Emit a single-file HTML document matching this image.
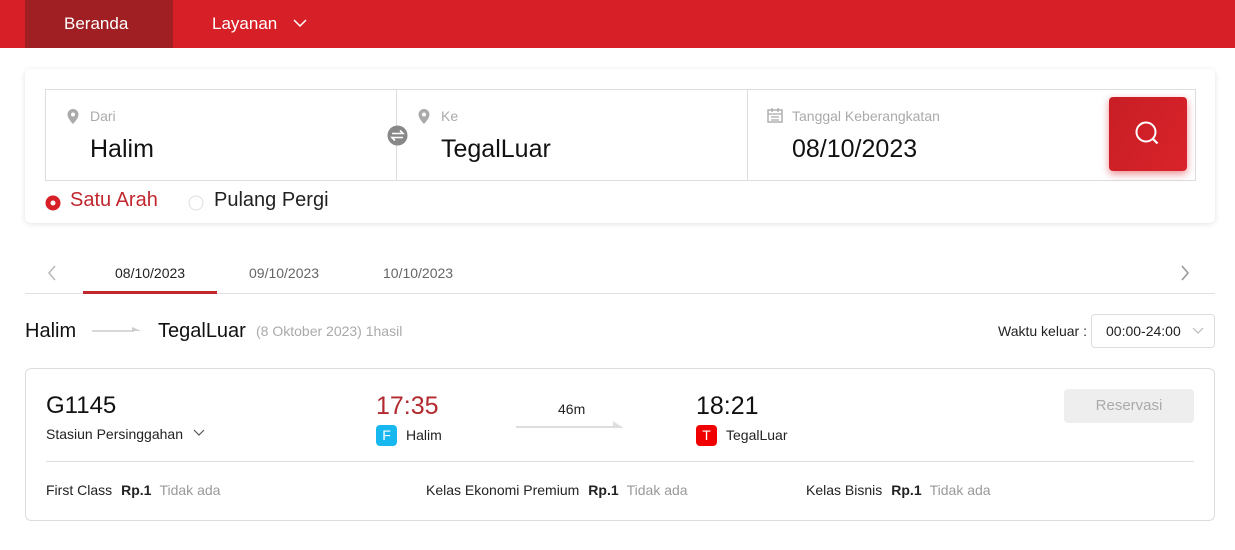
<!DOCTYPE html>
<html><head><meta charset="utf-8"><style>
*{box-sizing:border-box;margin:0;padding:0}
body{width:1235px;height:550px;overflow:hidden;background:#fff;font-family:"Liberation Sans",Arial,sans-serif;color:#111;position:relative}
.abs{position:absolute}
.hdr{position:absolute;left:0;top:0;width:1235px;height:48px;background:#d71f27}
.tab{position:absolute;top:0;height:48px;line-height:48px;color:#fff;font-size:17px}
.panel{position:absolute;left:25px;top:69px;width:1190px;height:154px;background:#fff;border-radius:6px;box-shadow:0 1px 6px rgba(0,0,0,.12)}
.box{position:absolute;left:45px;top:89px;width:1151px;height:92px;border:1px solid #ddd}
.lbl{font-size:14px;color:#aaa}
.big{font-size:25px;color:#111}
.card{position:absolute;left:25px;top:368px;width:1190px;height:153px;border:1px solid #ddd;border-radius:6px;background:#fff}
.p b{margin:0 8px 0 9px}
</style></head><body>
<div class="hdr"></div>
<div class="abs" style="left:25px;top:0;width:148px;height:48px;background:#9f1f23"></div>
<div class="tab" style="left:64px">Beranda</div>
<div class="tab" style="left:212px">Layanan</div>
<svg class="abs" style="left:293px;top:18px" width="14" height="10"><path d="M1 2l6 6 6-6" stroke="#fff" stroke-width="1.5" fill="none"/></svg>

<div class="panel"></div>
<div class="box"></div>
<div class="abs" style="left:396px;top:90px;width:1px;height:90px;background:#ddd"></div>
<div class="abs" style="left:747px;top:90px;width:1px;height:90px;background:#ddd"></div>
<svg class="abs" style="left:67px;top:109px" width="12" height="15"><path d="M6 0a5.5 5.5 0 0 0-5.5 5.5C.5 9.5 6 15 6 15s5.5-5.5 5.5-9.5A5.5 5.5 0 0 0 6 0z" fill="#aaa"/><circle cx="6" cy="5.5" r="2" fill="#fff"/></svg>
<div class="abs lbl" style="left:90px;top:108px">Dari</div>
<div class="abs big" style="left:90px;top:135px">Halim</div>
<svg class="abs" style="left:418px;top:109px" width="12" height="15"><path d="M6 0a5.5 5.5 0 0 0-5.5 5.5C.5 9.5 6 15 6 15s5.5-5.5 5.5-9.5A5.5 5.5 0 0 0 6 0z" fill="#aaa"/><circle cx="6" cy="5.5" r="2" fill="#fff"/></svg>
<div class="abs lbl" style="left:441px;top:108px">Ke</div>
<div class="abs big" style="left:441px;top:135px">TegalLuar</div>
<svg class="abs" style="left:387px;top:125px" width="21" height="21"><circle cx="10.5" cy="10.5" r="10" fill="#888"/><path d="M5 8.5h11l-3-3M16 12.5H5l3 3" stroke="#fff" stroke-width="1.6" fill="none"/></svg>
<svg class="abs" style="left:767px;top:108px" width="16" height="15"><rect x="1" y="2" width="14" height="12" fill="none" stroke="#aaa" stroke-width="1.4"/><path d="M1 6h14M5 0v4M11 0v4M4 9h8M4 12h8" stroke="#aaa" stroke-width="1.3"/></svg>
<div class="abs lbl" style="left:792px;top:108px">Tanggal Keberangkatan</div>
<div class="abs big" style="left:792px;top:135px">08/10/2023</div>
<div class="abs" style="left:1109px;top:97px;width:78px;height:74px;background:linear-gradient(120deg,#c81e25,#d9232a);border-radius:4px;box-shadow:0 3px 8px rgba(215,31,39,.5)"></div>
<svg class="abs" style="left:1134px;top:120px" width="28" height="28"><circle cx="12" cy="12" r="9.5" stroke="#fff" stroke-width="2" fill="none"/><path d="M18.5 18.5l5 5" stroke="#fff" stroke-width="2.2"/></svg>
<svg class="abs" style="left:45px;top:195px" width="16" height="16"><circle cx="8" cy="8" r="7.5" fill="#d71f27"/><circle cx="8" cy="8" r="2.5" fill="#fff"/></svg>
<div class="abs" style="left:70px;top:189px;font-size:20px;color:#c1272d">Satu Arah</div>
<svg class="abs" style="left:188px;top:195px" width="16" height="16"><circle cx="8" cy="8" r="7" fill="#fff" stroke="#ddd"/></svg>
<div class="abs" style="left:214px;top:189px;font-size:20px;color:#222">Pulang Pergi</div>

<svg class="abs" style="left:47px;top:265px" width="10" height="16"><path d="M8 1L2 8l6 7" stroke="#bbb" stroke-width="1.6" fill="none"/></svg>
<div class="abs" style="left:115px;top:265px;font-size:14px;color:#222">08/10/2023</div>
<div class="abs" style="left:249px;top:265px;font-size:14px;color:#666">09/10/2023</div>
<div class="abs" style="left:383px;top:265px;font-size:14px;color:#666">10/10/2023</div>
<svg class="abs" style="left:1180px;top:265px" width="10" height="16"><path d="M2 1l6 7-6 7" stroke="#999" stroke-width="1.6" fill="none"/></svg>
<div class="abs" style="left:25px;top:293px;width:1190px;height:1px;background:#e0e0e0"></div>
<div class="abs" style="left:83px;top:291px;width:134px;height:3px;background:#c1272d"></div>

<div class="abs" style="left:25px;top:320px;font-size:20px;color:#111">Halim</div>
<svg class="abs" style="left:92px;top:325px" width="50" height="10"><path d="M0 6h42" stroke="#ccc" stroke-width="1.5"/><path d="M40 2l9 4h-9z" fill="#ccc"/></svg>
<div class="abs" style="left:158px;top:320px;font-size:20px;color:#111">TegalLuar</div>
<div class="abs" style="left:256px;top:323px;font-size:14px;color:#aaa">(8 Oktober 2023) 1hasil</div>
<div class="abs" style="left:998px;top:323px;font-size:14px;color:#222">Waktu keluar :</div>
<div class="abs" style="left:1091px;top:314px;width:124px;height:34px;border:1px solid #ddd;border-radius:4px"></div>
<div class="abs" style="left:1106px;top:323px;font-size:14px;color:#222">00:00-24:00</div>
<svg class="abs" style="left:1192px;top:327px" width="12" height="8"><path d="M1 1l5 5 5-5" stroke="#bbb" stroke-width="1.2" fill="none"/></svg>

<div class="card"></div>
<div class="abs" style="left:46px;top:392px;font-size:24px;color:#111">G1145</div>
<div class="abs" style="left:46px;top:426px;font-size:14px;color:#222">Stasiun Persinggahan</div>
<svg class="abs" style="left:193px;top:429px" width="12" height="8"><path d="M1 1l5 5 5-5" stroke="#555" stroke-width="1.2" fill="none"/></svg>
<div class="abs" style="left:376px;top:392px;font-size:25px;color:#b22a30">17:35</div>
<div class="abs" style="left:376px;top:425px;width:21px;height:21px;border-radius:4px;background:#17b8f0;color:#fff;font-size:14px;text-align:center;line-height:21px">F</div>
<div class="abs" style="left:406px;top:427px;font-size:14px;color:#222">Halim</div>
<div class="abs" style="left:558px;top:401px;font-size:14px;color:#222">46m</div>
<svg class="abs" style="left:516px;top:418px" width="110" height="12"><path d="M0 9h106" stroke="#ddd" stroke-width="2"/><path d="M97 3l10 7h-10z" fill="#ddd"/></svg>
<div class="abs" style="left:696px;top:392px;font-size:25px;color:#111">18:21</div>
<div class="abs" style="left:696px;top:425px;width:21px;height:21px;border-radius:4px;background:#f00000;color:#fff;font-size:14px;text-align:center;line-height:21px">T</div>
<div class="abs" style="left:726px;top:427px;font-size:14px;color:#222">TegalLuar</div>
<div class="abs" style="left:1064px;top:389px;width:130px;height:34px;border-radius:4px;background:#eee;color:#aaa;font-size:15px;text-align:center;line-height:34px">Reservasi</div>
<div class="abs" style="left:46px;top:461px;width:1148px;height:1px;background:#ddd"></div>
<div class="abs p" style="left:46px;top:482px;font-size:14px;color:#222">First Class<b>Rp.1</b><span style="color:#999">Tidak ada</span></div>
<div class="abs p" style="left:426px;top:482px;font-size:14px;color:#222">Kelas Ekonomi Premium<b>Rp.1</b><span style="color:#999">Tidak ada</span></div>
<div class="abs p" style="left:806px;top:482px;font-size:14px;color:#222">Kelas Bisnis<b>Rp.1</b><span style="color:#999">Tidak ada</span></div>
</body></html>
